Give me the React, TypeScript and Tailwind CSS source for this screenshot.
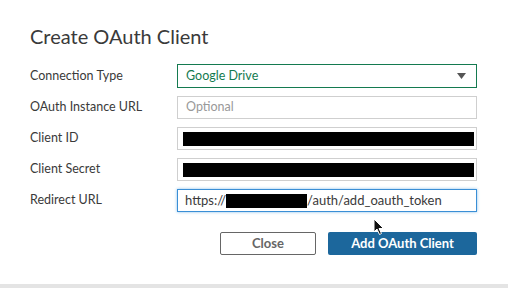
import React from "react"

const fields = [
  { label: "OAuth Instance URL", kind: "placeholder" },
  { label: "Client ID", kind: "secret" },
  { label: "Client Secret", kind: "secret" },
  { label: "Redirect URL", kind: "redirect" },
]

function Cursor() {
  return (
    <svg className="absolute left-[373px] top-[218px]" width="12" height="18" viewBox="0 0 12 18">
      <path
        d="M1 1 L1 14 L4 11 L6.5 16.5 L8.5 15.5 L6 10.5 L10.5 10.5 Z"
        fill="#111"
        stroke="#fff"
        strokeWidth="1"
        strokeLinejoin="round"
      />
    </svg>
  )
}

export default function App() {
  return (
    <div className="w-[508px] h-[288px] bg-[#e4e4e4] relative font-['Lato',sans-serif] overflow-hidden">
      <div className="h-[284px] bg-white pl-[30px] pr-[31px] pt-[22px]">
        <h1 className="text-[20px] leading-[28px] text-[#3a3a3a] font-normal">Create OAuth Client</h1>

        <div className="mt-[14px] grid grid-cols-[147px_300px] gap-y-[8px] items-center text-[12.5px] text-[#3a3a3a]">
          <div>Connection Type</div>
          <div className="h-[24px] border border-[#147a50] flex items-center justify-between pl-[8px] pr-[10px]">
            <span className="text-[#147a50]">Google Drive</span>
            <svg width="9" height="6" viewBox="0 0 9 6">
              <path d="M0 0 H9 L4.5 6 Z" fill="#555" />
            </svg>
          </div>

          {fields.map((f) => (
            <React.Fragment key={f.label}>
              <div>{f.label}</div>
              {f.kind === "placeholder" && (
                <div className="h-[23px] border border-[#cfcfcf] flex items-center pl-[8px] text-[#999]">Optional</div>
              )}
              {f.kind === "secret" && (
                <div className="h-[23px] border border-[#cfcfcf] flex items-center pl-[5px] pr-[2px]">
                  <div className="h-[14px] w-full bg-black" />
                </div>
              )}
              {f.kind === "redirect" && (
                <div className="h-[23px] border border-[#3a8fd6] shadow-[0_0_3px_#8cc0ea] flex items-center pl-[7px] text-[13px] text-[#3a3a3a]">
                  <span>https://</span>
                  <span className="inline-block h-[14px] w-[81px] bg-black" />
                  <span>/auth/add_oauth_token</span>
                </div>
              )}
            </React.Fragment>
          ))}
        </div>

        <div className="mt-[20px] flex justify-end gap-[12px] text-[13px] font-bold">
          <button className="w-[96px] h-[23px] border border-[#666] rounded-[2px] text-[#666] bg-white">Close</button>
          <button className="w-[149px] h-[23px] rounded-[2px] text-white bg-[#1c679c]">Add OAuth Client</button>
        </div>
      </div>
      <Cursor />
    </div>
  )
}
